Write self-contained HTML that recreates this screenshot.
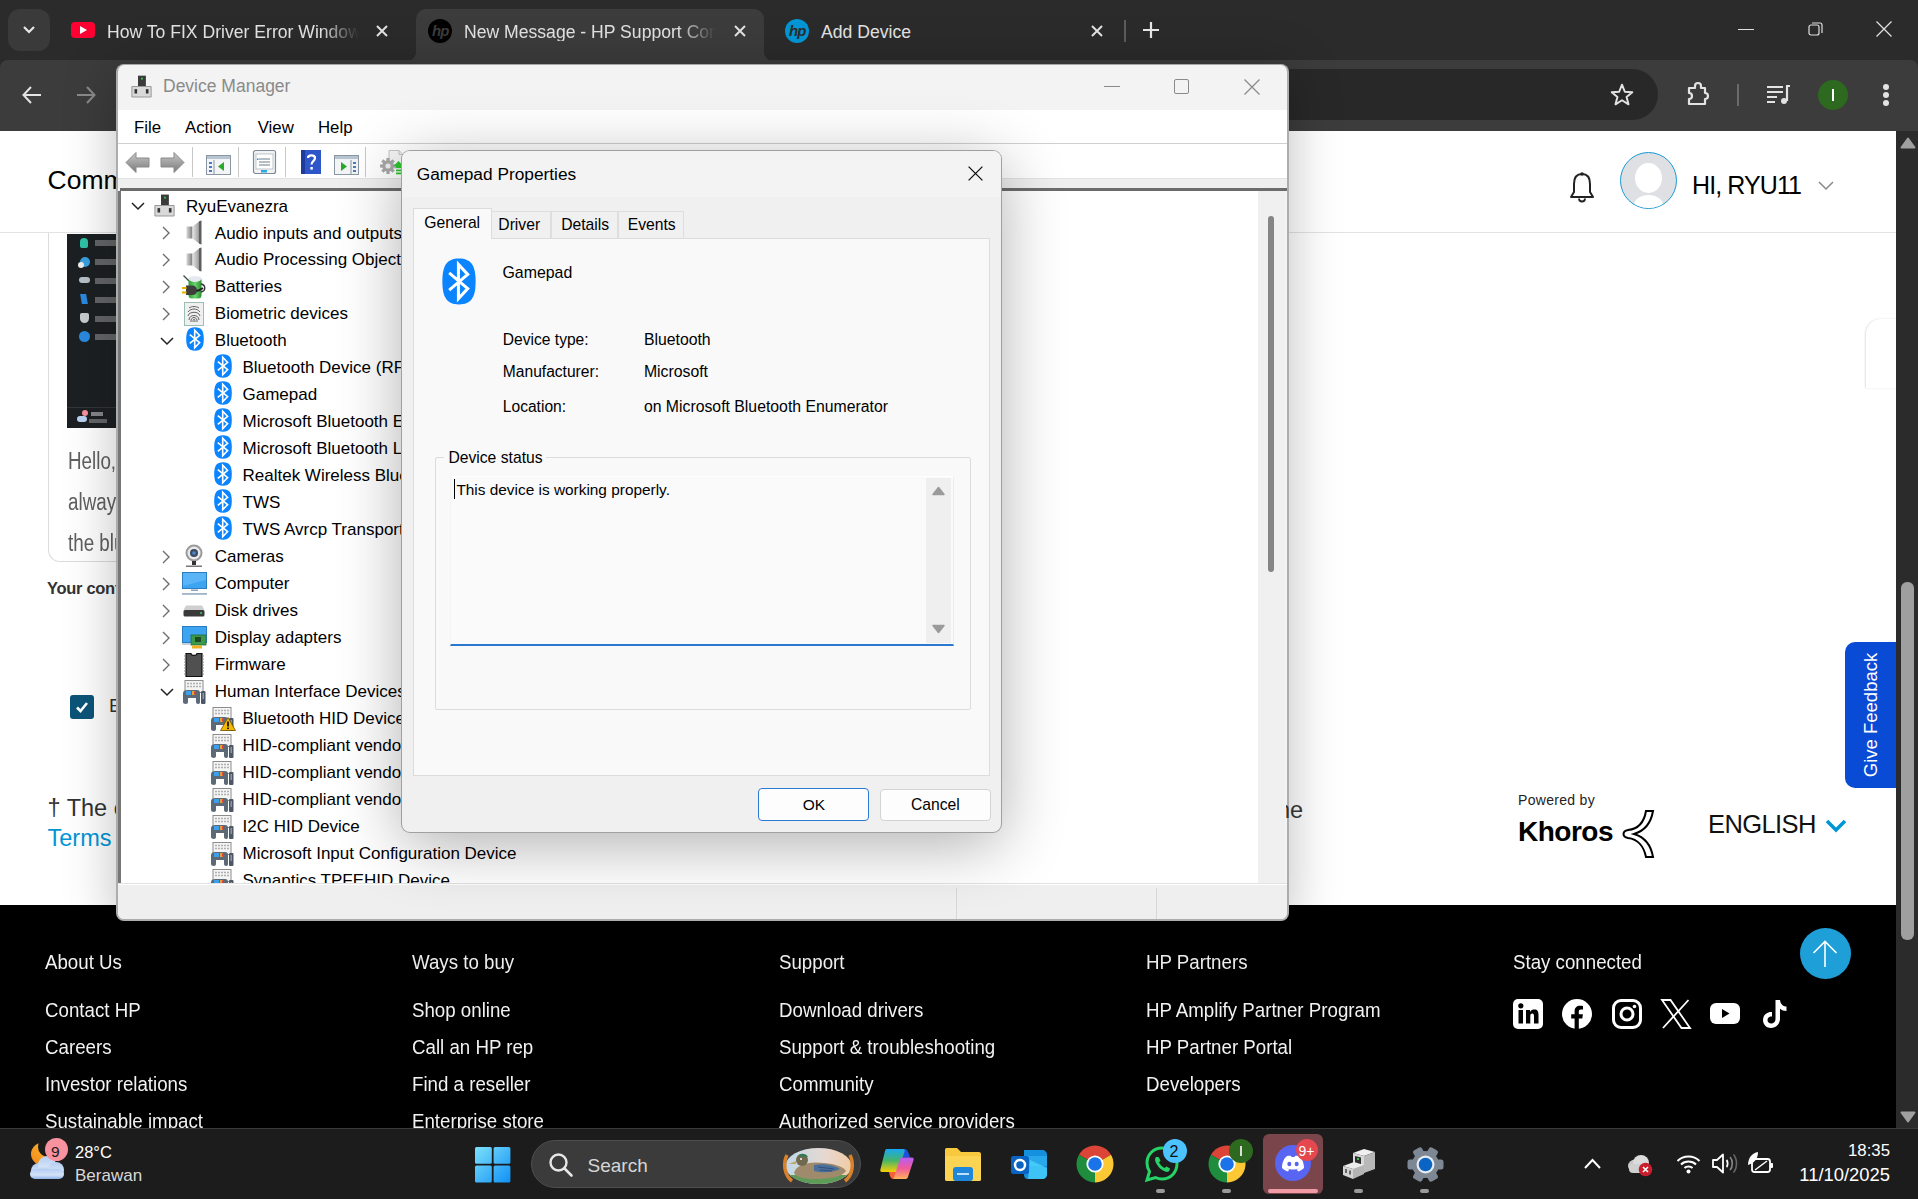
<!DOCTYPE html>
<html><head><meta charset="utf-8">
<style>
*{box-sizing:border-box}
html,body{margin:0;padding:0}
body{width:1918px;height:1199px;position:relative;overflow:hidden;background:#fff;font-family:"Liberation Sans",sans-serif}
.a{position:absolute}
.t{position:absolute;white-space:nowrap;line-height:1}
svg{position:absolute;overflow:visible}
</style></head><body>

<!-- ============ CHROME TAB STRIP ============ -->
<div class="a" style="left:0;top:0;width:1918px;height:80px;background:#2b2b2b"></div>
<!-- tab search dropdown -->
<div class="a" style="left:8px;top:9px;width:42px;height:42px;background:#3a3a3a;border-radius:12px"></div>
<svg style="left:22px;top:25px" width="14" height="10" viewBox="0 0 14 10"><path d="M2 2 L7 7 L12 2" fill="none" stroke="#e8e8e8" stroke-width="2.2"/></svg>
<!-- tab 1 -->
<div class="a" style="left:71px;top:22px;width:24px;height:16px;background:#ff0033;border-radius:4px"></div>
<svg style="left:80px;top:26px" width="8" height="8" viewBox="0 0 8 8"><path d="M0 0 L7 4 L0 8Z" fill="#fff"/></svg>
<div class="t" style="left:107px;top:23.5px;font-size:17.6px;color:#e3e3e3;width:252px;overflow:hidden;-webkit-mask-image:linear-gradient(90deg,#000 85%,transparent)">How To FIX Driver Error Windows 11</div>
<svg style="left:376px;top:25px" width="12" height="12" viewBox="0 0 12 12"><path d="M1 1 L11 11 M11 1 L1 11" stroke="#e3e3e3" stroke-width="2"/></svg>
<!-- tab 2 active -->
<div class="a" style="left:416px;top:9px;width:348px;height:52px;background:#3c3c3c;border-radius:10px 10px 0 0"></div>
<div class="a" style="left:406px;top:51px;width:10px;height:10px;background:radial-gradient(circle at 0 0,transparent 10px,#3c3c3c 10.5px)"></div>
<div class="a" style="left:764px;top:51px;width:10px;height:10px;background:radial-gradient(circle at 100% 0,transparent 10px,#3c3c3c 10.5px)"></div>
<div class="a" style="left:428px;top:19px;width:24px;height:24px;background:#000;border-radius:50%"></div>
<div class="t" style="left:432px;top:23px;font-size:15px;font-style:italic;font-weight:bold;color:#3c3c3c;letter-spacing:-1px">hp</div>
<div class="t" style="left:464px;top:23.5px;font-size:17.6px;color:#e3e3e3;width:252px;overflow:hidden;-webkit-mask-image:linear-gradient(90deg,#000 85%,transparent)">New Message - HP Support Community</div>
<svg style="left:734px;top:25px" width="12" height="12" viewBox="0 0 12 12"><path d="M1 1 L11 11 M11 1 L1 11" stroke="#e3e3e3" stroke-width="2"/></svg>
<!-- tab 3 -->
<div class="a" style="left:785px;top:19px;width:24px;height:24px;background:#0096d6;border-radius:50%"></div>
<div class="t" style="left:789px;top:23px;font-size:15px;font-style:italic;font-weight:bold;color:#2b2b2b;letter-spacing:-1px">hp</div>
<div class="t" style="left:821px;top:23.5px;font-size:17.6px;color:#e3e3e3">Add Device</div>
<svg style="left:1091px;top:25px" width="12" height="12" viewBox="0 0 12 12"><path d="M1 1 L11 11 M11 1 L1 11" stroke="#e3e3e3" stroke-width="2"/></svg>
<div class="a" style="left:1124px;top:20px;width:2px;height:22px;background:#5c5c5c"></div>
<svg style="left:1142px;top:21px" width="18" height="18" viewBox="0 0 18 18"><path d="M9 1 V17 M1 9 H17" stroke="#e8e8e8" stroke-width="2.2"/></svg>
<!-- window controls -->
<div class="a" style="left:1738px;top:29px;width:16px;height:1.2px;background:#e0e0e0"></div>
<svg style="left:1808px;top:21px" width="16" height="16" viewBox="0 0 16 16"><rect x="1" y="4" width="10" height="10" rx="2" fill="none" stroke="#e0e0e0" stroke-width="1.2"/><path d="M4 2 H12 a2 2 0 0 1 2 2 V12" fill="none" stroke="#e0e0e0" stroke-width="1.2"/></svg>
<svg style="left:1876px;top:21px" width="16" height="16" viewBox="0 0 16 16"><path d="M0.5 0.5 L15.5 15.5 M15.5 0.5 L0.5 15.5" stroke="#e0e0e0" stroke-width="1.3"/></svg>

<!-- ============ CHROME TOOLBAR ============ -->
<div class="a" style="left:0;top:60px;width:1918px;height:71px;background:#3c3c3c;border-radius:8px 8px 0 0"></div>
<svg style="left:22px;top:85px" width="20" height="20" viewBox="0 0 20 20"><path d="M19 10 H2 M9 2 L1.5 10 L9 18" fill="none" stroke="#e3e3e3" stroke-width="2"/></svg>
<svg style="left:76px;top:85px" width="20" height="20" viewBox="0 0 20 20"><path d="M1 10 H18 M11 2 L18.5 10 L11 18" fill="none" stroke="#8a8a8a" stroke-width="2"/></svg>
<!-- omnibox -->
<div class="a" style="left:130px;top:69px;width:1528px;height:51px;background:#282828;border-radius:26px"></div>
<svg style="left:1609px;top:82px" width="26" height="26" viewBox="0 0 24 24"><path d="M12 2.5 L14.6 9 L21.5 9.4 L16.2 13.8 L18 20.6 L12 16.8 L6 20.6 L7.8 13.8 L2.5 9.4 L9.4 9 Z" fill="none" stroke="#e3e3e3" stroke-width="1.8" stroke-linejoin="round"/></svg>
<!-- extensions puzzle -->
<svg style="left:1686px;top:82px" width="26" height="26" viewBox="0 0 26 26"><path d="M3 6 H9 V4 a3 3 0 0 1 6 0 V6 H19 V11 a3 3 0 0 1 0 6 V22 H3 V17 a3 3 0 0 0 0-6 Z" fill="none" stroke="#e3e3e3" stroke-width="2.2" stroke-linejoin="round"/></svg>
<div class="a" style="left:1737px;top:84px;width:2px;height:22px;background:#6a6a6a"></div>
<!-- media -->
<svg style="left:1766px;top:84px" width="26" height="22" viewBox="0 0 26 22"><path d="M1 3 H17 M1 8 H17 M1 13 H11 M1 18 H9" stroke="#e3e3e3" stroke-width="2"/><path d="M20 2 H24 M21 2 V17" stroke="#e3e3e3" stroke-width="2.2"/><circle cx="18" cy="17" r="3" fill="#e3e3e3"/></svg>
<div class="a" style="left:1818px;top:80px;width:30px;height:30px;background:#2d6a1f;border-radius:50%"></div>
<div class="a" style="left:1832px;top:89px;width:2px;height:12px;background:#fff"></div>
<div class="a" style="left:1883px;top:84px;width:6px;height:6px;background:#e3e3e3;border-radius:50%"></div>
<div class="a" style="left:1883px;top:92px;width:6px;height:6px;background:#e3e3e3;border-radius:50%"></div>
<div class="a" style="left:1883px;top:100px;width:6px;height:6px;background:#e3e3e3;border-radius:50%"></div>

<!-- ============ WEB PAGE ============ -->
<div id="page" class="a" style="left:0;top:131px;width:1897px;height:774px;background:#fff"></div>
<div class="t" style="left:47.5px;top:167.3px;font-size:26.5px;color:#000">Community</div>
<div class="a" style="left:0;top:232px;width:1897px;height:1px;background:#e3e3e3"></div>
<!-- card -->
<div class="a" style="left:48px;top:233px;width:600px;height:329px;border:1px solid #dcdcdc;border-top:none;border-radius:0 0 12px 12px"></div>
<div class="a" style="left:67px;top:234px;width:52px;height:194px;background:#1d2022;overflow:hidden">
  <div class="a" style="left:13px;top:4px;width:8px;height:10px;border-radius:4px 4px 2px 2px;background:#2ec4a6"></div>
  <div class="a" style="left:28px;top:6px;width:40px;height:6px;background:#bbb;opacity:.45"></div>
  <div class="a" style="left:13px;top:23px;width:10px;height:10px;border-radius:50%;background:#3aa0e0"></div>
  <div class="a" style="left:11px;top:28px;width:6px;height:6px;border-radius:50%;background:#eee"></div>
  <div class="a" style="left:28px;top:25px;width:40px;height:6px;background:#bbb;opacity:.45"></div>
  <div class="a" style="left:12px;top:43px;width:11px;height:6px;border-radius:3px;background:#b8c0c8"></div>
  <div class="a" style="left:28px;top:44px;width:40px;height:6px;background:#bbb;opacity:.45"></div>
  <div class="a" style="left:14px;top:60px;width:6px;height:10px;background:#2a8ae0;transform:skewX(10deg)"></div>
  <div class="a" style="left:28px;top:63px;width:40px;height:6px;background:#bbb;opacity:.45"></div>
  <div class="a" style="left:13px;top:79px;width:9px;height:10px;border-radius:2px 2px 5px 5px;background:#c8ccd0"></div>
  <div class="a" style="left:28px;top:82px;width:40px;height:6px;background:#bbb;opacity:.45"></div>
  <div class="a" style="left:12px;top:97px;width:11px;height:11px;border-radius:50%;background:#2a8ae0"></div>
  <div class="a" style="left:28px;top:100px;width:40px;height:6px;background:#bbb;opacity:.45"></div>
  <div class="a" style="left:0;top:173px;width:52px;height:1px;background:#333638"></div>
  <div class="a" style="left:10px;top:182px;width:10px;height:6px;border-radius:3px;background:#b9d3f2"></div>
  <div class="a" style="left:15px;top:176px;width:6px;height:6px;border-radius:50%;background:#f7929e"></div>
  <div class="a" style="left:24px;top:178px;width:12px;height:4px;background:#ccc;opacity:.6"></div>
  <div class="a" style="left:22px;top:185px;width:18px;height:4px;background:#aaa;opacity:.5"></div>
</div>
<div class="t" style="left:68px;top:441px;font-size:23.5px;color:#606060;line-height:41px;transform:scaleX(0.8);transform-origin:0 0">Hello,<br>always<br>the blue</div>
<div class="t" style="left:47px;top:580px;font-size:16.5px;color:#333;font-weight:bold;letter-spacing:-0.3px">Your content</div>
<div class="a" style="left:70px;top:695px;width:24px;height:24px;background:#0b5479;border-radius:3px"></div>
<svg style="left:75px;top:700px" width="14" height="14" viewBox="0 0 14 14"><path d="M2 7.5 L5.5 11 L12 3" fill="none" stroke="#fff" stroke-width="2.6"/></svg>
<div class="t" style="left:109px;top:696.2px;font-size:19px;color:#333">Email</div>
<div class="t" style="left:47.5px;top:797.4px;font-size:23.5px;color:#333">† The c</div>
<div class="t" style="left:47.5px;top:827.4px;font-size:23.5px;color:#0096d6">Terms</div>

<!-- header right -->
<svg style="left:1569px;top:171px" width="26" height="32" viewBox="0 0 26 32"><path d="M13 3 C7 3 5 8 5 13 V21 L2 26 H24 L21 21 V13 C21 8 19 3 13 3Z" fill="none" stroke="#222" stroke-width="2" stroke-linejoin="round"/><circle cx="13" cy="3" r="1.8" fill="#222"/><path d="M10 27.5 a3 3 0 0 0 6 0" fill="none" stroke="#222" stroke-width="1.8"/></svg>
<div class="a" style="left:1620px;top:152px;width:57px;height:57px;border-radius:50%;background:#dfe0e4;border:1.5px solid #1a9ad6;overflow:hidden">
  <div class="a" style="left:14px;top:10px;width:27px;height:30px;border-radius:50%;background:#fff"></div>
  <div class="a" style="left:13px;top:42px;width:29px;height:20px;border-radius:50% 50% 0 0;background:#fff"></div>
</div>
<div class="t" style="left:1692px;top:172.7px;font-size:25px;color:#000;letter-spacing:-0.9px">HI, RYU11</div>
<svg style="left:1818px;top:181px" width="16" height="10" viewBox="0 0 16 10"><path d="M1 1 L8 8 L15 1" fill="none" stroke="#888" stroke-width="1.5"/></svg>
<!-- right edge box -->
<div class="a" style="left:1866px;top:319px;width:40px;height:69px;border-radius:15px 0 0 0;background:#fff;box-shadow:-1px 0 2px rgba(0,0,0,.12)"></div>
<!-- give feedback -->
<div class="a" style="left:1845px;top:642px;width:52px;height:146px;background:#0a4bd6;border-radius:10px 0 0 10px"></div>
<div class="t" style="left:1871px;top:715px;font-size:18.5px;color:#fff;transform:translate(-50%,-50%) rotate(-90deg);font-weight:500">Give Feedback</div>
<!-- powered by -->
<div class="t" style="left:1518px;top:792.5px;font-size:14px;color:#222;letter-spacing:0.3px">Powered by</div>
<div class="t" style="left:1518px;top:817.6px;font-size:28px;color:#000;font-weight:bold;letter-spacing:-0.5px">Khoros</div>
<svg style="left:1620px;top:809px" width="36" height="50" viewBox="0 0 36 50"><path d="M33 2 H26 C24 14 18 20 8 21 C2 22 2 28 8 29 C18 30 24 38 26 48 H33 C31 36 24 28 14 25 C24 22 31 14 33 2Z" fill="none" stroke="#000" stroke-width="2"/></svg>
<div class="t" style="left:1708px;top:812.1px;font-size:25.5px;color:#111;letter-spacing:-0.6px">ENGLISH</div>
<svg style="left:1825px;top:819px" width="22" height="14" viewBox="0 0 22 14"><path d="M2 2 L11 11 L20 2" fill="none" stroke="#0096d6" stroke-width="3.5"/></svg>

<!-- page scrollbar -->
<div class="a" style="left:1896px;top:131px;width:22px;height:997px;background:#2b2b2b"></div>
<svg style="left:1900px;top:137px" width="16" height="12" viewBox="0 0 16 12"><path d="M8 1.5 L14.5 10.5 H1.5Z" fill="#a0a0a0" stroke="#a0a0a0" stroke-width="2" stroke-linejoin="round"/></svg>
<div class="a" style="left:1901px;top:582px;width:13px;height:358px;background:#9f9f9f;border-radius:6px"></div>
<svg style="left:1900px;top:1111px" width="16" height="12" viewBox="0 0 16 12"><path d="M8 10.5 L14.5 1.5 H1.5Z" fill="#a0a0a0" stroke="#a0a0a0" stroke-width="2" stroke-linejoin="round"/></svg>

<!-- ============ FOOTER ============ -->
<div id="footer" class="a" style="left:0;top:905px;width:1896px;height:223px;background:#000;overflow:hidden">
<div class="t" style="left:45px;top:46.6px;font-size:20.5px;color:#f2f2f2;transform:scaleX(0.912);transform-origin:0 0;">About Us</div>
<div class="t" style="left:45px;top:95.3px;font-size:20.5px;color:#f2f2f2;transform:scaleX(0.912);transform-origin:0 0;">Contact HP</div>
<div class="t" style="left:45px;top:132.3px;font-size:20.5px;color:#f2f2f2;transform:scaleX(0.912);transform-origin:0 0;">Careers</div>
<div class="t" style="left:45px;top:169.3px;font-size:20.5px;color:#f2f2f2;transform:scaleX(0.912);transform-origin:0 0;">Investor relations</div>
<div class="t" style="left:45px;top:206.3px;font-size:20.5px;color:#f2f2f2;transform:scaleX(0.912);transform-origin:0 0;">Sustainable impact</div>
<div class="t" style="left:412px;top:46.6px;font-size:20.5px;color:#f2f2f2;transform:scaleX(0.912);transform-origin:0 0;">Ways to buy</div>
<div class="t" style="left:412px;top:95.3px;font-size:20.5px;color:#f2f2f2;transform:scaleX(0.912);transform-origin:0 0;">Shop online</div>
<div class="t" style="left:412px;top:132.3px;font-size:20.5px;color:#f2f2f2;transform:scaleX(0.912);transform-origin:0 0;">Call an HP rep</div>
<div class="t" style="left:412px;top:169.3px;font-size:20.5px;color:#f2f2f2;transform:scaleX(0.912);transform-origin:0 0;">Find a reseller</div>
<div class="t" style="left:412px;top:206.3px;font-size:20.5px;color:#f2f2f2;transform:scaleX(0.912);transform-origin:0 0;">Enterprise store</div>
<div class="t" style="left:779px;top:46.6px;font-size:20.5px;color:#f2f2f2;transform:scaleX(0.912);transform-origin:0 0;">Support</div>
<div class="t" style="left:779px;top:95.3px;font-size:20.5px;color:#f2f2f2;transform:scaleX(0.912);transform-origin:0 0;">Download drivers</div>
<div class="t" style="left:779px;top:132.3px;font-size:20.5px;color:#f2f2f2;transform:scaleX(0.912);transform-origin:0 0;">Support &amp; troubleshooting</div>
<div class="t" style="left:779px;top:169.3px;font-size:20.5px;color:#f2f2f2;transform:scaleX(0.912);transform-origin:0 0;">Community</div>
<div class="t" style="left:779px;top:206.3px;font-size:20.5px;color:#f2f2f2;transform:scaleX(0.912);transform-origin:0 0;">Authorized service providers</div>
<div class="t" style="left:1146px;top:46.6px;font-size:20.5px;color:#f2f2f2;transform:scaleX(0.912);transform-origin:0 0;">HP Partners</div>
<div class="t" style="left:1146px;top:95.3px;font-size:20.5px;color:#f2f2f2;transform:scaleX(0.912);transform-origin:0 0;">HP Amplify Partner Program</div>
<div class="t" style="left:1146px;top:132.3px;font-size:20.5px;color:#f2f2f2;transform:scaleX(0.912);transform-origin:0 0;">HP Partner Portal</div>
<div class="t" style="left:1146px;top:169.3px;font-size:20.5px;color:#f2f2f2;transform:scaleX(0.912);transform-origin:0 0;">Developers</div>
<div class="t" style="left:1513px;top:46.6px;font-size:20.5px;color:#f2f2f2;transform:scaleX(0.912);transform-origin:0 0;">Stay connected</div>
<div class="a" style="left:1800px;top:23px;width:51px;height:51px;border-radius:50%;background:#1e9fd8"></div>
<svg style="left:1812px;top:35px" width="26" height="28" viewBox="0 0 26 28"><path d="M13 27 V2 M1.5 13 L13 1.5 L24.5 13" fill="none" stroke="#fff" stroke-width="1.6"/></svg>
<svg style="left:1513px;top:94px" width="30" height="30" viewBox="0 0 30 30"><rect x="0" y="0" width="30" height="30" rx="5" fill="#fff"/><rect x="5.5" y="11" width="4.5" height="13.5" fill="#000"/><circle cx="7.8" cy="6.8" r="2.6" fill="#000"/><path d="M13 11 H17 V13 C18 11.2 19.8 10.6 21.5 10.6 C24.5 10.6 25.5 12.6 25.5 16 V24.5 H21 V17 C21 15.3 20.6 14.4 19.2 14.4 C17.8 14.4 17.3 15.4 17.3 17 V24.5 H13Z" fill="#000"/></svg>
<svg style="left:1562px;top:94px" width="30" height="30" viewBox="0 0 30 30"><circle cx="15" cy="15" r="15" fill="#fff"/><path d="M16.8 30 V19.5 H20.3 L20.9 15.3 H16.8 V12.7 C16.8 11.5 17.3 10.6 19 10.6 H21 V7 C20.3 6.9 19.1 6.7 17.9 6.7 C14.8 6.7 12.6 8.6 12.6 12.1 V15.3 H9.2 V19.5 H12.6 V30Z" fill="#000"/></svg>
<svg style="left:1612px;top:94px" width="30" height="30" viewBox="0 0 30 30"><rect x="1.5" y="1.5" width="27" height="27" rx="7.5" fill="none" stroke="#fff" stroke-width="3"/><circle cx="15" cy="15" r="6" fill="none" stroke="#fff" stroke-width="3"/><circle cx="22.5" cy="7.5" r="1.8" fill="#fff"/></svg>
<svg style="left:1661px;top:94px" width="30" height="30" viewBox="0 0 30 30"><path d="M1 1 H9.5 L29 29 H20.5Z" fill="none" stroke="#fff" stroke-width="1.8"/><path d="M27.5 1 L2 29" stroke="#fff" stroke-width="1.8"/></svg>
<svg style="left:1710px;top:98px" width="30" height="22" viewBox="0 0 30 22"><rect x="0" y="0" width="30" height="21" rx="6" fill="#fff"/><path d="M12 6 L19.5 10.5 L12 15Z" fill="#000"/></svg>
<svg style="left:1762px;top:94px" width="26" height="30" viewBox="0 0 26 30"><path d="M13.5 1 H18 C18.3 4.8 20.8 7.3 24.5 7.6 V12 C22 12 19.8 11.2 18 9.8 V19.5 C18 25 14 29 9 29 C4.5 29 1 25.5 1 21 C1 16.2 5 12.6 10 13 V17.6 C7.5 17.2 5.5 18.8 5.5 21 C5.5 23 7.2 24.6 9.2 24.6 C11.6 24.6 13.5 22.8 13.5 20Z" fill="#fff"/></svg>
</div>

<!-- ============ TASKBAR ============ -->
<div id="taskbar" class="a" style="left:0;top:1128px;width:1918px;height:71px;background:#1c1c1c;border-top:1px solid #3a3a3a"></div>
<svg style="left:26px;top:1140px" width="40" height="42" viewBox="0 0 40 42"><defs><mask id="moonm"><rect x="0" y="0" width="40" height="42" fill="#fff"/><circle cx="22" cy="7" r="10" fill="#000"/></mask><linearGradient id="cldg" x1="0" y1="0" x2="0" y2="1"><stop offset="0" stop-color="#b3cdf3"/><stop offset=".6" stop-color="#d3e2f7"/><stop offset="1" stop-color="#8fb2ea"/></linearGradient><linearGradient id="moong" x1="1" y1="0" x2="0" y2="1"><stop offset="0" stop-color="#f3c12c"/><stop offset="1" stop-color="#f7861c"/></linearGradient></defs><circle cx="16" cy="14" r="11" fill="url(#moong)" mask="url(#moonm)"/><circle cx="13" cy="31" r="8" fill="url(#cldg)"/><circle cx="21" cy="25" r="9" fill="url(#cldg)"/><circle cx="30" cy="30" r="8" fill="url(#cldg)"/><rect x="4" y="29" width="34" height="10" rx="5" fill="url(#cldg)"/></svg>
<div class="a" style="left:45px;top:1138px;width:23px;height:23px;border-radius:50%;background:#f7929e"></div>
<div class="t" style="left:51px;top:1143.8px;font-size:15.5px;color:#1a1a1a;">9</div>
<div class="t" style="left:75px;top:1143.9px;font-size:16.5px;color:#fff;">28°C</div>
<div class="t" style="left:75px;top:1166.8px;font-size:17px;color:#d8d8d8;">Berawan</div>
<svg style="left:475px;top:1147px" width="36" height="36" viewBox="0 0 36 36"><defs><linearGradient id="wg" gradientUnits="userSpaceOnUse" x1="0" y1="0" x2="36" y2="36"><stop offset="0" stop-color="#7ce1fb"/><stop offset="1" stop-color="#0f8ff5"/></linearGradient></defs><rect x="0" y="0" width="16.8" height="16.8" rx="1.5" fill="url(#wg)"/><rect x="18.6" y="0" width="16.8" height="16.8" rx="1.5" fill="url(#wg)"/><rect x="0" y="18.6" width="16.8" height="16.8" rx="1.5" fill="url(#wg)"/><rect x="18.6" y="18.6" width="16.8" height="16.8" rx="1.5" fill="url(#wg)"/></svg>
<div class="a" style="left:531px;top:1140px;width:330px;height:48px;border-radius:24px;background:#3b3b3b;border:1px solid #4e4e4e"></div>
<svg style="left:548px;top:1152px" width="26" height="26" viewBox="0 0 26 26"><circle cx="10.5" cy="10.5" r="8" fill="none" stroke="#e6e6e6" stroke-width="2.4"/><path d="M16.5 16.5 L23.5 23.5" stroke="#e6e6e6" stroke-width="2.6" stroke-linecap="round"/></svg>
<div class="t" style="left:587.5px;top:1155.6px;font-size:19px;color:#d6d6d6;">Search</div>
<svg style="left:780px;top:1147px" width="77" height="38" viewBox="0 0 77 38"><defs><linearGradient id="sky" x1="0" y1="0" x2="1" y2="0"><stop offset="0" stop-color="#b8d8ea"/><stop offset=".6" stop-color="#e8d8d0"/><stop offset="1" stop-color="#f2c89a"/></linearGradient><clipPath id="dclip"><ellipse cx="38.5" cy="19" rx="33" ry="18"/></clipPath></defs><g clip-path="url(#dclip)"><rect x="0" y="0" width="77" height="38" fill="url(#sky)"/><rect x="0" y="28" width="77" height="10" fill="#5e9a58"/><path d="M14 26 C16 18 28 14 44 16 C56 17 64 20 66 24 C62 30 50 32 36 32 C24 32 16 30 14 26Z" fill="#a08a6c"/><path d="M34 18 C42 16 54 18 60 22 C52 26 42 26 34 24Z" fill="#4a6f9a"/><path d="M38 20 L54 22 M40 23 L52 24" stroke="#2f4f80" stroke-width="1.2"/><circle cx="22" cy="13" r="6" fill="#6f6a4e"/><path d="M18 9 C20 6 26 6 28 10 Z" fill="#2f7a5a"/><path d="M16 14 L9 17 L16 17Z" fill="#c8a060"/><circle cx="21" cy="12" r="1" fill="#fff"/></g><path d="M7 8 C3 16 4 28 12 34" stroke="#d9822a" stroke-width="3.5" fill="none"/><path d="M70 8 C74 16 73 28 65 34" stroke="#d9822a" stroke-width="3.5" fill="none"/></svg>
<svg style="left:879px;top:1148px" width="36" height="32" viewBox="0 0 36 32"><defs><linearGradient id="cpL" x1="0" y1="0" x2="0" y2="1"><stop offset="0" stop-color="#19a7f2"/><stop offset=".5" stop-color="#45b56a"/><stop offset="1" stop-color="#f8d000"/></linearGradient><linearGradient id="cpR" x1="0" y1="0" x2="0" y2="1"><stop offset="0" stop-color="#b45ef5"/><stop offset=".5" stop-color="#f05a9c"/><stop offset="1" stop-color="#ffb25a"/></linearGradient></defs><path d="M21 1 H26 C28 1 29.5 4 31 9.5 H21Z" fill="#1f50d8"/><path d="M9.5 22 H19 L15.5 31 H14 C11.5 31 10.5 27 9.5 22Z" fill="#f4603a"/><path d="M8 1 H24 C25.5 1 26 2 25.6 3.5 L19.5 22 C19 23.5 18 24 16.5 24 H3 C1.5 24 1 23 1.4 21.5 L6 3 C6.4 1.6 7 1 8 1Z" fill="url(#cpL)"/><path d="M24 9.5 H33 C34.5 9.5 35 10.5 34.6 12 L29 29 C28.5 30.5 27.5 31 26 31 H14.5 L20.5 12 C21 10.3 22 9.5 24 9.5Z" fill="url(#cpR)"/></svg>
<svg style="left:944px;top:1147px" width="38" height="34" viewBox="0 0 38 34"><path d="M1 3 C1 1.5 2 1 3 1 H13 L17 5 H35 C36.5 5 37 6 37 7 V32 C37 33 36.5 34 35 34 H3 C2 34 1 33 1 32Z" fill="#f8c93e"/><rect x="1" y="9" width="36" height="25" rx="2" fill="#fcd453"/><rect x="9" y="20" width="20" height="14" rx="3" fill="#1f86d9"/><rect x="13" y="26" width="12" height="2" fill="#bfe0fa"/></svg>
<svg style="left:1010px;top:1148px" width="38" height="32" viewBox="0 0 38 32"><path d="M14 2 H32 C35 2 37 4 37 7 V26 C37 29 35 31 32 31 H18 C15 31 14 29 14 26Z" fill="#1490df"/><path d="M14 8 L37 8 L37 18 L14 18Z" fill="#28a8ea"/><path d="M20 12 L37 20 V26 C37 29 35 31 32 31 H18Z" fill="#50d9ff" opacity=".7"/><rect x="1" y="8" width="18" height="18" rx="2.5" fill="#0a64c4"/><circle cx="10" cy="17" r="5" fill="none" stroke="#fff" stroke-width="2.4"/></svg>
<svg style="left:1076px;top:1145px" width="38" height="38" viewBox="0 0 38 38"><path d="M19 19 L2.98 9.75 A18.5 18.5 0 0 1 35.02 9.75 Z" fill="#db4437"/><path d="M19 19 L35.02 9.75 A18.5 18.5 0 0 1 19 37.5 Z" fill="#fcc934"/><path d="M19 19 L19 37.5 A18.5 18.5 0 0 1 2.98 9.75 Z" fill="#1e8e3e"/><circle cx="19" cy="19" r="8.6" fill="#fff"/><circle cx="19" cy="19" r="6.8" fill="#1a73e8"/></svg>
<svg style="left:1142px;top:1144px" width="40" height="40" viewBox="0 0 40 40"><path d="M20 4 C11 4 5 11 5 19 C5 22 6 25 7.5 27.5 L5 36 L13.5 33.5 C15.5 34.5 17.7 35 20 35 C29 35 35 28 35 19.5 C35 11 29 4 20 4Z" fill="none" stroke="#25d366" stroke-width="3"/><path d="M14 13 C13 14 12.5 16 14 19 C16 23 19 26 23 27.5 C25.5 28.5 27 27.5 27.5 26.5 L28 24.5 L24.5 22.5 L22.5 24 C20.5 23 18 20.5 17 18.5 L18.5 16.5 L16.5 13Z" fill="#25d366"/></svg>
<div class="a" style="left:1163px;top:1139px;width:24px;height:24px;border-radius:50%;background:#4cc2ff"></div>
<div class="t" style="left:1169.5px;top:1143.9px;font-size:16px;color:#111;">2</div>
<div class="a" style="left:1156px;top:1189px;width:9px;height:4px;border-radius:2px;background:#9a9a9a"></div>
<svg style="left:1208px;top:1145px" width="38" height="38" viewBox="0 0 38 38"><path d="M19 19 L2.98 9.75 A18.5 18.5 0 0 1 35.02 9.75 Z" fill="#db4437"/><path d="M19 19 L35.02 9.75 A18.5 18.5 0 0 1 19 37.5 Z" fill="#fcc934"/><path d="M19 19 L19 37.5 A18.5 18.5 0 0 1 2.98 9.75 Z" fill="#1e8e3e"/><circle cx="19" cy="19" r="8.6" fill="#fff"/><circle cx="19" cy="19" r="6.8" fill="#1a73e8"/></svg>
<div class="a" style="left:1229px;top:1139px;width:24px;height:24px;border-radius:50%;background:#2d6a1f"></div>
<div class="a" style="left:1240px;top:1146px;width:2px;height:10px;background:#ddd"></div>
<div class="a" style="left:1222px;top:1189px;width:9px;height:4px;border-radius:2px;background:#9a9a9a"></div>
<div class="a" style="left:1263px;top:1134px;width:60px;height:60px;border-radius:6px;background:#7b454c"></div>
<div class="a" style="left:1275px;top:1145px;width:36px;height:36px;border-radius:50%;background:#5865f2"></div>
<svg style="left:1281px;top:1155px" width="24" height="17" viewBox="0 0 24 17"><path d="M6 1 C8 0.6 9 0.5 10 1 L10.5 2 H13.5 L14 1 C15 0.5 16 0.6 18 1 C21 3 23 8 23 13 C21 15 19 16 17 16.5 L15.8 14.5 C17 14 18 13.5 18.6 13 C14 15 10 15 5.4 13 C6 13.5 7 14 8.2 14.5 L7 16.5 C5 16 3 15 1 13 C1 8 3 3 6 1Z" fill="#fff"/><ellipse cx="8.3" cy="9" rx="2" ry="2.2" fill="#5865f2"/><ellipse cx="15.7" cy="9" rx="2" ry="2.2" fill="#5865f2"/></svg>
<div class="a" style="left:1296px;top:1139px;width:22px;height:22px;border-radius:50%;background:#e5484f"></div>
<div class="t" style="left:1298.5px;top:1143.5px;font-size:14px;color:#fff;">9+</div>
<div class="a" style="left:1268px;top:1189px;width:50px;height:4px;border-radius:2px;background:#f19ba6"></div>
<svg style="left:1342px;top:1147px" width="34" height="34" viewBox="0 0 34 34"><path d="M11 6 L22 2 L33 5 L22 9Z" fill="#f0f0f0"/><path d="M22 9 L33 5 V22 L22 26Z" fill="#b8b8b8"/><path d="M11 6 L22 9 V26 L11 23Z" fill="#d8d8d8"/><path d="M13 9 L19 10.5 V19 L13 17.5Z" fill="#2e2e2e"/><circle cx="16" cy="12" r="1.1" fill="#3fe05a"/><path d="M1 19 L12 15 L22 18 L11 22Z" fill="#ececec"/><path d="M11 22 L22 18 V27 L11 32Z" fill="#b4b4b4"/><path d="M1 19 L11 22 V32 L1 28Z" fill="#d4d4d4"/><rect x="3" y="22" width="2" height="4" fill="#666"/><rect x="7" y="23.5" width="2" height="4" fill="#666"/></svg>
<div class="a" style="left:1354px;top:1189px;width:9px;height:4px;border-radius:2px;background:#9a9a9a"></div>
<svg style="left:1407px;top:1146px" width="37" height="37" viewBox="-18.5 -18.5 37 37"><defs><linearGradient id="grg" x1="0" y1="0" x2="0" y2="1"><stop offset="0" stop-color="#8a949e"/><stop offset="1" stop-color="#6a747e"/></linearGradient></defs><g fill="url(#grg)"><rect x="-5" y="-18" width="10" height="9" rx="2.5" fill="#7d8894" transform="rotate(30)"/><rect x="-5" y="-18" width="10" height="9" rx="2.5" fill="#7d8894" transform="rotate(90)"/><rect x="-5" y="-18" width="10" height="9" rx="2.5" fill="#7d8894" transform="rotate(150)"/><rect x="-5" y="-18" width="10" height="9" rx="2.5" fill="#7d8894" transform="rotate(210)"/><rect x="-5" y="-18" width="10" height="9" rx="2.5" fill="#7d8894" transform="rotate(270)"/><rect x="-5" y="-18" width="10" height="9" rx="2.5" fill="#7d8894" transform="rotate(330)"/><circle cx="0" cy="0" r="13.5" fill="#7d8894"/></g><circle cx="0" cy="0" r="9" fill="#e6ecf2"/><circle cx="0" cy="0" r="6.8" fill="#0b63c4"/></svg>
<div class="a" style="left:1420px;top:1189px;width:9px;height:4px;border-radius:2px;background:#9a9a9a"></div>
<svg style="left:1584px;top:1158px" width="17" height="11" viewBox="0 0 17 11"><path d="M1 10 L8.5 2 L16 10" fill="none" stroke="#fff" stroke-width="2"/></svg>
<svg style="left:1627px;top:1154px" width="26" height="23" viewBox="0 0 26 23"><ellipse cx="8" cy="12" rx="7" ry="6.5" fill="#c8c8c8"/><ellipse cx="14" cy="9" rx="8" ry="8" fill="#dcdcdc"/><rect x="2" y="10" width="20" height="9" rx="4" fill="#d0d0d0"/><circle cx="18.5" cy="15.5" r="6.8" fill="#c81e2d"/><path d="M16 13 L21 18 M21 13 L16 18" stroke="#fff" stroke-width="1.6"/></svg>
<svg style="left:1676px;top:1154px" width="25" height="20" viewBox="0 0 25 20"><path d="M1.5 7 C7.5 1 17.5 1 23.5 7" fill="none" stroke="#fff" stroke-width="2"/><path d="M5 10.5 C9 6.5 16 6.5 20 10.5" fill="none" stroke="#fff" stroke-width="2"/><path d="M8.5 14 C10.5 12 14.5 12 16.5 14" fill="none" stroke="#fff" stroke-width="2"/><circle cx="12.5" cy="17.5" r="2" fill="#fff"/></svg>
<svg style="left:1712px;top:1153px" width="25" height="21" viewBox="0 0 25 21"><path d="M1 7 H5 L11 1.5 V19.5 L5 14 H1Z" fill="none" stroke="#fff" stroke-width="1.8" stroke-linejoin="round"/><path d="M14.5 7 C16 8.5 16 12.5 14.5 14" fill="none" stroke="#fff" stroke-width="1.8"/><path d="M18 4 C21 7 21 14 18 17" fill="none" stroke="#888" stroke-width="1.6"/><path d="M21.5 1.5 C25.5 6 25.5 15 21.5 19.5" fill="none" stroke="#666" stroke-width="1.6"/></svg>
<svg style="left:1747px;top:1151px" width="27" height="23" viewBox="0 0 27 23"><rect x="5" y="8" width="18" height="13" rx="2.5" fill="none" stroke="#fff" stroke-width="1.8"/><rect x="23" y="12" width="3" height="5" rx="1" fill="#fff"/><path d="M1 14 C1 7 5 2 11 1 C11 7 8 12 1 14Z" fill="#fff"/><path d="M8 19 L20 10" stroke="#fff" stroke-width="1.5"/></svg>
<div class="t" style="left:1790px;width:100px;text-align:right;top:1143.4px;font-size:16.8px;color:#fff">18:35</div>
<div class="t" style="left:1790px;width:100px;text-align:right;top:1166.2px;font-size:18.4px;color:#fff">11/10/2025</div>

<!-- ============ DEVICE MANAGER ============ -->
<svg width="0" height="0" style="position:absolute"><defs>
<symbol id="i-bt" viewBox="0 0 18 24"><path d="M9 0.3 C15.5 0.3 17.8 4 17.8 12 C17.8 20 15.5 23.7 9 23.7 C2.5 23.7 0.2 20 0.2 12 C0.2 4 2.5 0.3 9 0.3Z" fill="#0a84ff"/><path d="M3.8 7.6 L13.6 15.6 L8.7 20.7 V3.3 L13.6 8.4 L3.8 16.4" fill="none" stroke="#fff" stroke-width="1.6" stroke-linejoin="miter"/></symbol>
<symbol id="i-comp" viewBox="0 0 24 26"><rect x="8" y="0.5" width="9" height="12" fill="#3a3a3a"/><rect x="11.5" y="3" width="2" height="2" fill="#39d353"/><path d="M1 13 H23 V25 H1Z" fill="#d9d9d9" stroke="#8e8e8e" stroke-width="1"/><rect x="4" y="16" width="3" height="5" fill="#333"/><rect x="17" y="16" width="3" height="5" fill="#333"/></symbol>
<symbol id="i-spk" viewBox="0 0 22 25"><defs><linearGradient id="spg1" x1="0" y1="0" x2="1" y2="0"><stop offset="0" stop-color="#d8d8d8"/><stop offset="1" stop-color="#7c7c7c"/></linearGradient><linearGradient id="spg2" x1="0" y1="0" x2="1" y2="0"><stop offset="0" stop-color="#e6e6e6"/><stop offset=".7" stop-color="#a8a8a8"/><stop offset="1" stop-color="#6a6a6a"/></linearGradient></defs><rect x="3.5" y="6.5" width="6" height="12" fill="url(#spg1)"/><path d="M9.5 6.5 L17.5 0.5 V24.5 L9.5 18.5Z" fill="url(#spg2)"/><path d="M16 1.5 L18.5 0.5 V24.5 L16 23.5Z" fill="#5e5e5e"/></symbol>
<symbol id="i-bat" viewBox="0 0 24 24"><defs><linearGradient id="btg" x1="0" y1="0" x2="1" y2="0"><stop offset="0" stop-color="#2a9a3a"/><stop offset=".5" stop-color="#6ad66a"/><stop offset="1" stop-color="#2a8a34"/></linearGradient></defs><path d="M1.5 0.5 L7 6" stroke="#444" stroke-width="1.2"/><rect x="6.5" y="2" width="13" height="21.5" rx="3.5" fill="url(#btg)"/><ellipse cx="13" cy="4" rx="6.2" ry="3" fill="#e8e8f2"/><path d="M19 9 C24 10 24 16 19 17" fill="none" stroke="#333" stroke-width="1.4"/><path d="M4 10.5 H10 C13 10.5 15 12.5 15 15.5 C15 18.5 13 20 10 20 H4Z" fill="#3e3e3e"/><rect x="0" y="12" width="4.5" height="2" fill="#e0b400"/><rect x="0" y="16.5" width="4.5" height="2" fill="#e0b400"/><path d="M14.5 16 C17 15.5 19 14.5 21 13" stroke="#222" stroke-width="2" fill="none"/></symbol>
<symbol id="i-fp" viewBox="0 0 20 24"><rect x="0.5" y="0.5" width="19" height="23" fill="#f0f0f0" stroke="#9bbdb5" stroke-width="1"/><path d="M5 6 C8 4 12 4 15 6 M4 10 C7 6 13 6 16 10 M4 14 C5 9 15 9 16 14 M5 18 C5 12 15 12 15 18 M7 20 C6 14 14 14 13 20 M9 20 C9 16 11 16 11 20" fill="none" stroke="#606060" stroke-width="1"/></symbol>
<symbol id="i-cam" viewBox="0 0 20 25"><circle cx="10" cy="9" r="8.5" fill="#9a9a9a"/><circle cx="10" cy="9" r="6.5" fill="#eaeaea"/><circle cx="10" cy="9" r="4" fill="#3a4a60"/><circle cx="10" cy="9" r="1.8" fill="#4a88d0"/><rect x="8" y="17" width="4" height="4" fill="#333"/><rect x="2" y="21.5" width="16" height="1.5" fill="#777"/></symbol>
<symbol id="i-mon" viewBox="0 0 25 23"><rect x="0.5" y="0.5" width="24" height="16" fill="#3da4f2" stroke="#2b7dc2" stroke-width="1"/><path d="M1 1 H24 V8 L1 14Z" fill="#6cc0fb" opacity=".6"/><rect x="9" y="17.5" width="7" height="1.5" fill="#8aa4bb"/><rect x="0" y="21" width="25" height="1.8" fill="#9fb4c8"/></symbol>
<symbol id="i-disk" viewBox="0 0 22 12"><path d="M3 0.5 H19 L21.5 5 H0.5Z" fill="#cfcfcf"/><rect x="0.5" y="5" width="21" height="6.5" rx="1.5" fill="#3a3a3a"/><circle cx="18" cy="8" r="1" fill="#39d353"/></symbol>
<symbol id="i-disp" viewBox="0 0 25 23"><rect x="0.5" y="0.5" width="24" height="16" fill="#3da4f2" stroke="#2b7dc2" stroke-width="1"/><rect x="9" y="9" width="15" height="10" fill="#3a9a4a" stroke="#2a6a30" stroke-width="0.8"/><rect x="13" y="11" width="6" height="5" fill="#1d4a24"/><rect x="10" y="19.5" width="10" height="3" fill="#f0b020"/><rect x="0" y="17.5" width="9" height="1" fill="#8aa4bb"/></symbol>
<symbol id="i-fw" viewBox="0 0 20 24"><path d="M2 0.5 H7 C7 3 13 3 13 0.5 H18 V23.5 H2Z" fill="#505050" stroke="#111" stroke-width="1.2"/><path d="M0 3 H2 M0 6 H2 M0 9 H2 M0 12 H2 M0 15 H2 M0 18 H2 M0 21 H2 M18 3 H20 M18 6 H20 M18 9 H20 M18 12 H20 M18 15 H20 M18 18 H20 M18 21 H20" stroke="#888" stroke-width="1"/></symbol>
<symbol id="i-hid" viewBox="0 0 24 24"><rect x="3" y="0.5" width="18" height="12" fill="#f4f4f4" stroke="#8c8c8c" stroke-width="1"/><path d="M5 3.5 H19 M5 6.5 H19" stroke="#b0b0b0" stroke-width="1.4" stroke-dasharray="2 1"/><path d="M1 13 C1 11 3 10 5 10 H15 C17 10 18 11 18 13 V22 C18 23.5 17 24 16 24 C15 24 14 23 14 22 V18 H6 V22 C6 23 5 24 4 24 C2 24 1 23 1 22Z" fill="#5c6a78"/><rect x="4" y="11" width="5" height="4" fill="#3aa0f0"/><rect x="10" y="11" width="3" height="4" fill="#e8a030"/><rect x="12" y="11.5" width="2" height="3" fill="#d04040"/><rect x="19" y="11" width="4.5" height="13" rx="1" fill="#4c5866"/><rect x="20.5" y="13" width="1.5" height="6" fill="#8a96a4"/></symbol>
<symbol id="i-warn" viewBox="0 0 16 14"><path d="M8 0.5 L15.5 13.5 H0.5Z" fill="#f5b800" stroke="#6a5000" stroke-width="0.8"/><rect x="7.2" y="4.5" width="1.6" height="5" fill="#000"/><rect x="7.2" y="10.5" width="1.6" height="1.6" fill="#000"/></symbol>
</defs></svg>
<div id="dm" class="a" style="left:116px;top:64px;width:1173px;height:857px;background:#f3f3f3;border-radius:8px;border:2px solid #adadad;border-top:1px solid #a5a5a5;box-shadow:0 6px 52px rgba(0,0,0,.26);overflow:hidden">
<svg style="left:13px;top:10px" width="21" height="23" viewBox="0 0 24 26"><use href="#i-comp"/></svg>
<div class="t" style="left:45px;top:13.3px;font-size:17.5px;color:#8a8a8a;">Device Manager</div>
<div class="a" style="left:986px;top:21px;width:16px;height:1.3px;background:#8a8a8a"></div>
<div class="a" style="left:1056px;top:14px;width:15px;height:15px;border:1.3px solid #8a8a8a;border-radius:2px"></div>
<svg style="left:1126px;top:14px" width="16" height="16" viewBox="0 0 16 16"><path d="M0.5 0.5 L15.5 15.5 M15.5 0.5 L0.5 15.5" stroke="#8a8a8a" stroke-width="1.3"/></svg>
<div class="a" style="left:0;top:45px;width:1169px;height:33px;background:#fff"></div>
<div class="a" style="left:0;top:78px;width:1169px;height:1px;background:#d0d0d0"></div>
<div class="t" style="left:16px;top:54.5px;font-size:16.8px;color:#000;">File</div>
<div class="t" style="left:67px;top:54.5px;font-size:16.8px;color:#000;">Action</div>
<div class="t" style="left:139.7px;top:54.5px;font-size:16.8px;color:#000;">View</div>
<div class="t" style="left:200px;top:54.5px;font-size:16.8px;color:#000;">Help</div>
<div class="a" style="left:0;top:79px;width:1169px;height:34px;background:#fff"></div>
<div class="a" style="left:0;top:113px;width:1169px;height:10px;background:#efefef;border-top:1px solid #e2e2e2"></div>
<div class="a" style="left:2px;top:123px;width:1167px;height:2.5px;background:#6c6c6c"></div>
<svg style="left:7px;top:86px" width="25" height="23" viewBox="0 0 25 23"><defs><linearGradient id="ag" x1="0" y1="0" x2="0" y2="1"><stop offset="0" stop-color="#c8c8c8"/><stop offset="1" stop-color="#7a7a7a"/></linearGradient></defs><path d="M1 11.5 L11 1.5 V7 H24 V16 H11 V21.5Z" fill="url(#ag)" stroke="#8a8a8a" stroke-width="1"/></svg>
<svg style="left:42px;top:86px" width="25" height="23" viewBox="0 0 25 23"><path d="M24 11.5 L14 1.5 V7 H1 V16 H14 V21.5Z" fill="url(#ag)" stroke="#8a8a8a" stroke-width="1"/></svg>
<svg style="left:73.5px;top:82px" width="2" height="30" viewBox="0 0 2 30"><rect x="0" y="0" width="1" height="30" fill="#c8c8c8"/></svg>
<svg style="left:120px;top:82px" width="2" height="30" viewBox="0 0 2 30"><rect x="0" y="0" width="1" height="30" fill="#c8c8c8"/></svg>
<svg style="left:166.5px;top:82px" width="2" height="30" viewBox="0 0 2 30"><rect x="0" y="0" width="1" height="30" fill="#c8c8c8"/></svg>
<svg style="left:247px;top:82px" width="2" height="30" viewBox="0 0 2 30"><rect x="0" y="0" width="1" height="30" fill="#c8c8c8"/></svg>
<svg style="left:88px;top:90px" width="25" height="20" viewBox="0 0 25 20"><rect x="0.5" y="0.5" width="24" height="19" fill="#f2f4f6" stroke="#8a96a2" stroke-width="1"/><rect x="1" y="1" width="23" height="3" fill="#b8c4d0"/><rect x="3" y="7" width="3" height="2" fill="#4a7ac0"/><rect x="3" y="11" width="3" height="2" fill="#4a7ac0"/><rect x="3" y="15" width="3" height="2" fill="#4a7ac0"/><path d="M8 5 V19" stroke="#8a96a2"/><path d="M18 7 L12 11.5 L18 16Z" fill="#2aa82a"/></svg>
<svg style="left:135px;top:85px" width="23" height="24" viewBox="0 0 23 24"><rect x="0.5" y="0.5" width="22" height="23" rx="2" fill="#f0f2f4" stroke="#7e8a96" stroke-width="1.2"/><rect x="3" y="4" width="17" height="15" fill="#fff" stroke="#b0b8c0" stroke-width="0.8"/><path d="M6 9 H17 M6 12 H17 M6 15 H17" stroke="#6a7a8a" stroke-width="1"/><rect x="4" y="8.5" width="1.5" height="1.5" fill="#2a8ae0"/><rect x="8" y="20" width="6" height="2.5" fill="#2aa8e8"/></svg>
<svg style="left:183px;top:85px" width="20" height="24" viewBox="0 0 20 24"><rect x="0" y="0" width="20" height="24" fill="#2e56c8"/><rect x="0" y="0" width="4" height="24" fill="#1e3a9a"/><path d="M7 8 C7 4.5 14 4.5 14 8 C14 11 10.5 11 10.5 14.5" fill="none" stroke="#fff" stroke-width="2.2"/><rect x="9.4" y="17" width="2.4" height="2.6" fill="#fff"/></svg>
<svg style="left:216px;top:90px" width="25" height="20" viewBox="0 0 25 20"><rect x="0.5" y="0.5" width="24" height="19" fill="#f2f4f6" stroke="#8a96a2" stroke-width="1"/><rect x="1" y="1" width="23" height="3" fill="#b8c4d0"/><rect x="19" y="7" width="3" height="2" fill="#4a7ac0"/><rect x="19" y="11" width="3" height="2" fill="#4a7ac0"/><rect x="19" y="15" width="3" height="2" fill="#4a7ac0"/><path d="M17 5 V19" stroke="#8a96a2"/><path d="M7 7 L13 11.5 L7 16Z" fill="#2aa82a"/></svg>
<svg style="left:262px;top:85px" width="24" height="26" viewBox="0 0 24 26"><path d="M9 0.5 H19 L23 4.5 V18 H9Z" fill="#f6f6f6" stroke="#b8b8b8" stroke-width="0.8"/><path d="M19 0.5 V4.5 H23" fill="none" stroke="#b8b8b8" stroke-width="0.8"/><g transform="translate(8,16)"><rect x="-1.6" y="-8" width="3.2" height="4" fill="#a8a8a8" transform="rotate(0)"/><rect x="-1.6" y="-8" width="3.2" height="4" fill="#a8a8a8" transform="rotate(45)"/><rect x="-1.6" y="-8" width="3.2" height="4" fill="#a8a8a8" transform="rotate(90)"/><rect x="-1.6" y="-8" width="3.2" height="4" fill="#a8a8a8" transform="rotate(135)"/><rect x="-1.6" y="-8" width="3.2" height="4" fill="#a8a8a8" transform="rotate(180)"/><rect x="-1.6" y="-8" width="3.2" height="4" fill="#a8a8a8" transform="rotate(225)"/><rect x="-1.6" y="-8" width="3.2" height="4" fill="#a8a8a8" transform="rotate(270)"/><rect x="-1.6" y="-8" width="3.2" height="4" fill="#a8a8a8" transform="rotate(315)"/><circle r="5.8" fill="#a8a8a8"/><circle r="2.6" fill="#f0f0f0"/></g><path d="M18.5 11 L23.5 16 H21 V18 H16 V16 H13.5Z" fill="#2ec42e"/><rect x="16" y="19.5" width="6" height="1.8" fill="#2ec42e"/><rect x="16" y="22.5" width="6" height="1.8" fill="#2ec42e"/></svg>
<div class="a" style="left:0;top:125.5px;width:1141px;height:692.5px;background:#fff;border-left:3px solid #767676"></div>
<div class="a" style="left:1140px;top:125.5px;width:27px;height:692.5px;background:#f0f0f0"></div>
<div class="a" style="left:1150px;top:151px;width:6px;height:356px;background:#858585;border-radius:3px"></div>
<div class="a" style="left:0;top:818px;width:1169px;height:2px;background:#e2e2e2;border-bottom:1px solid #fff"></div>
<div class="a" style="left:0;top:820px;width:1169px;height:40px;background:#efefef"></div>
<div class="a" style="left:838px;top:823px;width:1px;height:32px;background:#d8d8d8"></div>
<div class="a" style="left:1037.5px;top:823px;width:1px;height:32px;background:#d8d8d8"></div>
<div class="a" style="left:3px;top:125.5px;width:1138px;height:692.5px;overflow:hidden">
<svg style="left:9.5px;top:11.0px" width="14" height="8" viewBox="0 0 14 8"><path d="M1 1 L7 7 L13 1" fill="none" stroke="#222" stroke-width="1.5"/></svg>
<svg style="left:33.0px;top:3.0px" width="21" height="23" viewBox="0 0 21 23"><use href="#i-comp" width="21" height="23"/></svg>
<div class="t" style="left:65.0px;top:7.0px;font-size:17px;color:#000">RyuEvanezra</div>
<svg style="left:41.0px;top:35.5px" width="8" height="14" viewBox="0 0 8 14"><path d="M1 1 L7 7 L1 13" fill="none" stroke="#6e6e6e" stroke-width="1.4"/></svg>
<svg style="left:62.0px;top:29.5px" width="22" height="25" viewBox="0 0 22 25"><use href="#i-spk" width="22" height="25"/></svg>
<div class="t" style="left:93.8px;top:34.0px;font-size:17px;color:#000">Audio inputs and outputs</div>
<svg style="left:41.0px;top:62.5px" width="8" height="14" viewBox="0 0 8 14"><path d="M1 1 L7 7 L1 13" fill="none" stroke="#6e6e6e" stroke-width="1.4"/></svg>
<svg style="left:62.0px;top:56.5px" width="22" height="25" viewBox="0 0 22 25"><use href="#i-spk" width="22" height="25"/></svg>
<div class="t" style="left:93.8px;top:60.9px;font-size:17px;color:#000">Audio Processing Objects (APOs)</div>
<svg style="left:41.0px;top:89.5px" width="8" height="14" viewBox="0 0 8 14"><path d="M1 1 L7 7 L1 13" fill="none" stroke="#6e6e6e" stroke-width="1.4"/></svg>
<svg style="left:61.0px;top:84.0px" width="24" height="24" viewBox="0 0 24 24"><use href="#i-bat" width="24" height="24"/></svg>
<div class="t" style="left:93.8px;top:87.9px;font-size:17px;color:#000">Batteries</div>
<svg style="left:41.0px;top:116.5px" width="8" height="14" viewBox="0 0 8 14"><path d="M1 1 L7 7 L1 13" fill="none" stroke="#6e6e6e" stroke-width="1.4"/></svg>
<svg style="left:63.0px;top:111.0px" width="20" height="24" viewBox="0 0 20 24"><use href="#i-fp" width="20" height="24"/></svg>
<div class="t" style="left:93.8px;top:114.9px;font-size:17px;color:#000">Biometric devices</div>
<svg style="left:38.5px;top:146.0px" width="14" height="8" viewBox="0 0 14 8"><path d="M1 1 L7 7 L13 1" fill="none" stroke="#222" stroke-width="1.5"/></svg>
<svg style="left:65.0px;top:136.7px" width="18" height="24" viewBox="0 0 18 24"><use href="#i-bt" width="18" height="24"/></svg>
<div class="t" style="left:93.8px;top:141.9px;font-size:17px;color:#000">Bluetooth</div>
<svg style="left:93.0px;top:163.7px" width="18" height="24" viewBox="0 0 18 24"><use href="#i-bt" width="18" height="24"/></svg>
<div class="t" style="left:121.5px;top:168.9px;font-size:17px;color:#000">Bluetooth Device (RFCOMM Protocol TDI)</div>
<svg style="left:93.0px;top:190.7px" width="18" height="24" viewBox="0 0 18 24"><use href="#i-bt" width="18" height="24"/></svg>
<div class="t" style="left:121.5px;top:195.9px;font-size:17px;color:#000">Gamepad</div>
<svg style="left:93.0px;top:217.7px" width="18" height="24" viewBox="0 0 18 24"><use href="#i-bt" width="18" height="24"/></svg>
<div class="t" style="left:121.5px;top:222.9px;font-size:17px;color:#000">Microsoft Bluetooth Enumerator</div>
<svg style="left:93.0px;top:244.7px" width="18" height="24" viewBox="0 0 18 24"><use href="#i-bt" width="18" height="24"/></svg>
<div class="t" style="left:121.5px;top:249.9px;font-size:17px;color:#000">Microsoft Bluetooth LE Enumerator</div>
<svg style="left:93.0px;top:271.7px" width="18" height="24" viewBox="0 0 18 24"><use href="#i-bt" width="18" height="24"/></svg>
<div class="t" style="left:121.5px;top:276.9px;font-size:17px;color:#000">Realtek Wireless Bluetooth Adapter</div>
<svg style="left:93.0px;top:298.7px" width="18" height="24" viewBox="0 0 18 24"><use href="#i-bt" width="18" height="24"/></svg>
<div class="t" style="left:121.5px;top:303.9px;font-size:17px;color:#000">TWS</div>
<svg style="left:93.0px;top:325.7px" width="18" height="24" viewBox="0 0 18 24"><use href="#i-bt" width="18" height="24"/></svg>
<div class="t" style="left:121.5px;top:330.9px;font-size:17px;color:#000">TWS Avrcp Transport</div>
<svg style="left:41.0px;top:359.5px" width="8" height="14" viewBox="0 0 8 14"><path d="M1 1 L7 7 L1 13" fill="none" stroke="#6e6e6e" stroke-width="1.4"/></svg>
<svg style="left:63.0px;top:353.0px" width="20" height="25" viewBox="0 0 20 25"><use href="#i-cam" width="20" height="25"/></svg>
<div class="t" style="left:93.8px;top:357.9px;font-size:17px;color:#000">Cameras</div>
<svg style="left:41.0px;top:386.5px" width="8" height="14" viewBox="0 0 8 14"><path d="M1 1 L7 7 L1 13" fill="none" stroke="#6e6e6e" stroke-width="1.4"/></svg>
<svg style="left:60.5px;top:381.5px" width="25" height="23" viewBox="0 0 25 23"><use href="#i-mon" width="25" height="23"/></svg>
<div class="t" style="left:93.8px;top:384.9px;font-size:17px;color:#000">Computer</div>
<svg style="left:41.0px;top:413.5px" width="8" height="14" viewBox="0 0 8 14"><path d="M1 1 L7 7 L1 13" fill="none" stroke="#6e6e6e" stroke-width="1.4"/></svg>
<svg style="left:62.0px;top:414.5px" width="22" height="12" viewBox="0 0 22 12"><use href="#i-disk" width="22" height="12"/></svg>
<div class="t" style="left:93.8px;top:411.9px;font-size:17px;color:#000">Disk drives</div>
<svg style="left:41.0px;top:440.5px" width="8" height="14" viewBox="0 0 8 14"><path d="M1 1 L7 7 L1 13" fill="none" stroke="#6e6e6e" stroke-width="1.4"/></svg>
<svg style="left:60.5px;top:435.5px" width="25" height="23" viewBox="0 0 25 23"><use href="#i-disp" width="25" height="23"/></svg>
<div class="t" style="left:93.8px;top:438.9px;font-size:17px;color:#000">Display adapters</div>
<svg style="left:41.0px;top:467.5px" width="8" height="14" viewBox="0 0 8 14"><path d="M1 1 L7 7 L1 13" fill="none" stroke="#6e6e6e" stroke-width="1.4"/></svg>
<svg style="left:63.0px;top:462.0px" width="20" height="24" viewBox="0 0 20 24"><use href="#i-fw" width="20" height="24"/></svg>
<div class="t" style="left:93.8px;top:465.9px;font-size:17px;color:#000">Firmware</div>
<svg style="left:38.5px;top:497.0px" width="14" height="8" viewBox="0 0 14 8"><path d="M1 1 L7 7 L13 1" fill="none" stroke="#222" stroke-width="1.5"/></svg>
<svg style="left:61.0px;top:489.0px" width="24" height="24" viewBox="0 0 24 24"><use href="#i-hid" width="24" height="24"/></svg>
<div class="t" style="left:93.8px;top:492.9px;font-size:17px;color:#000">Human Interface Devices</div>
<svg style="left:89.0px;top:516.0px" width="24" height="24" viewBox="0 0 24 24"><use href="#i-hid" width="24" height="24"/></svg>
<svg style="left:99.0px;top:526.0px" width="16" height="14" viewBox="0 0 16 14"><use href="#i-warn"/></svg>
<div class="t" style="left:121.5px;top:519.9px;font-size:17px;color:#000">Bluetooth HID Device</div>
<svg style="left:89.0px;top:543.0px" width="24" height="24" viewBox="0 0 24 24"><use href="#i-hid" width="24" height="24"/></svg>
<div class="t" style="left:121.5px;top:546.9px;font-size:17px;color:#000">HID-compliant vendor-defined device</div>
<svg style="left:89.0px;top:570.0px" width="24" height="24" viewBox="0 0 24 24"><use href="#i-hid" width="24" height="24"/></svg>
<div class="t" style="left:121.5px;top:573.9px;font-size:17px;color:#000">HID-compliant vendor-defined device</div>
<svg style="left:89.0px;top:597.0px" width="24" height="24" viewBox="0 0 24 24"><use href="#i-hid" width="24" height="24"/></svg>
<div class="t" style="left:121.5px;top:600.9px;font-size:17px;color:#000">HID-compliant vendor-defined device</div>
<svg style="left:89.0px;top:624.0px" width="24" height="24" viewBox="0 0 24 24"><use href="#i-hid" width="24" height="24"/></svg>
<div class="t" style="left:121.5px;top:627.9px;font-size:17px;color:#000">I2C HID Device</div>
<svg style="left:89.0px;top:651.0px" width="24" height="24" viewBox="0 0 24 24"><use href="#i-hid" width="24" height="24"/></svg>
<div class="t" style="left:121.5px;top:654.9px;font-size:17px;color:#000">Microsoft Input Configuration Device</div>
<svg style="left:89.0px;top:678.0px" width="24" height="24" viewBox="0 0 24 24"><use href="#i-hid" width="24" height="24"/></svg>
<div class="t" style="left:121.5px;top:681.9px;font-size:17px;color:#000">Synaptics TPFEHID Device</div>
</div>
</div>
<div class="a" style="left:1286px;top:790px;width:30px;height:40px;overflow:hidden"><div class="t" style="left:-9.1px;top:9px;font-size:23.5px;color:#333">ne</div></div>

<!-- ============ GAMEPAD PROPERTIES ============ -->
<div id="dlg" class="a" style="left:402px;top:151px;width:599px;height:681px;background:#f0f0f0;border-radius:8px;box-shadow:0 0 0 1px #a0a0a0,0 12px 64px rgba(0,0,0,.32);overflow:hidden">
<div class="a" style="left:0.0px;top:0.0px;width:599.0px;height:46.0px;background:#f3f3f3"></div>
<div class="t" style="left:14.7px;top:14.7px;font-size:17.3px;color:#000;">Gamepad Properties</div>
<svg style="left:566px;top:15px" width="15" height="15" viewBox="0 0 15 15"><path d="M0.6 0.6 L14.4 14.4 M14.4 0.6 L0.6 14.4" stroke="#111" stroke-width="1.3"/></svg>
<div class="a" style="left:11.0px;top:86.5px;width:576.5px;height:538.5px;background:#f9f9f9;border:1px solid #dcdcdc"></div>
<div class="a" style="left:89.0px;top:60.0px;width:60.0px;height:27.0px;background:#f0f0f0;border:1px solid #dedede;border-bottom:none"></div>
<div class="t" style="left:96.3px;top:66.2px;font-size:15.7px;color:#000;">Driver</div>
<div class="a" style="left:149.0px;top:60.0px;width:66.5px;height:27.0px;background:#f0f0f0;border:1px solid #dedede;border-bottom:none"></div>
<div class="t" style="left:159.2px;top:66.2px;font-size:15.7px;color:#000;">Details</div>
<div class="a" style="left:215.5px;top:60.0px;width:66.1px;height:27.0px;background:#f0f0f0;border:1px solid #dedede;border-bottom:none"></div>
<div class="t" style="left:225.7px;top:66.2px;font-size:15.7px;color:#000;">Events</div>
<div class="a" style="left:11.0px;top:56.5px;width:78.5px;height:31.0px;background:#f9f9f9;border:1px solid #dcdcdc;border-bottom:none"></div>
<div class="t" style="left:22.3px;top:63.9px;font-size:15.7px;color:#000;">General</div>
<svg style="left:40px;top:107px" width="34" height="47" viewBox="0 0 18 24" preserveAspectRatio="none"><use href="#i-bt"/></svg>
<div class="t" style="left:100.5px;top:113.7px;font-size:15.9px;color:#000;">Gamepad</div>
<div class="t" style="left:100.8px;top:180.9px;font-size:15.6px;color:#000;">Device type:</div>
<div class="t" style="left:241.9px;top:180.8px;font-size:15.8px;color:#000;">Bluetooth</div>
<div class="t" style="left:100.8px;top:213.4px;font-size:15.6px;color:#000;">Manufacturer:</div>
<div class="t" style="left:241.9px;top:213.3px;font-size:15.8px;color:#000;">Microsoft</div>
<div class="t" style="left:100.8px;top:248.0px;font-size:15.6px;color:#000;">Location:</div>
<div class="t" style="left:241.9px;top:247.9px;font-size:15.8px;color:#000;">on Microsoft Bluetooth Enumerator</div>
<div class="a" style="left:33.0px;top:306.2px;width:535.5px;height:253.3px;border:1px solid #dcdcdc;border-radius:2px"></div>
<div class="a" style="left:42.0px;top:299.0px;width:102.0px;height:16.0px;background:#f9f9f9"></div>
<div class="t" style="left:46.4px;top:299.1px;font-size:15.7px;color:#000;">Device status</div>
<div class="a" style="left:47.5px;top:324.5px;width:504.5px;height:170.5px;background:#fafafa;border:1px solid #ececec;border-bottom:2px solid #2a78d0;border-top-color:#fff;border-left-color:#f4f4f4"></div>
<div class="a" style="left:524.0px;top:326.5px;width:25.0px;height:165.5px;background:#efefef"></div>
<svg style="left:530px;top:335px" width="13" height="10" viewBox="0 0 13 10"><path d="M6.5 1.5 L12 8.5 H1Z" fill="#9a9a9a" stroke="#9a9a9a" stroke-width="1.5" stroke-linejoin="round"/></svg>
<svg style="left:530px;top:473px" width="13" height="10" viewBox="0 0 13 10"><path d="M6.5 8.5 L12 1.5 H1Z" fill="#9a9a9a" stroke="#9a9a9a" stroke-width="1.5" stroke-linejoin="round"/></svg>
<div class="t" style="left:54.4px;top:330.6px;font-size:15.4px;color:#000;">This device is working properly.</div>
<div class="a" style="left:52.0px;top:328.0px;width:1.2px;height:19.5px;background:#000"></div>
<div class="a" style="left:356.3px;top:636.9px;width:110.7px;height:32.7px;background:#fdfdfd;border:1.5px solid #2b7bd4;border-radius:4px"></div>
<div class="t" style="left:400.7px;top:645.8px;font-size:15.5px;color:#000;">OK</div>
<div class="a" style="left:478.0px;top:637.5px;width:110.5px;height:32.1px;background:#fdfdfd;border:1px solid #d3d3d3;border-radius:4px"></div>
<div class="t" style="left:509.0px;top:645.7px;font-size:15.7px;color:#000;">Cancel</div>
</div>

</body></html>
